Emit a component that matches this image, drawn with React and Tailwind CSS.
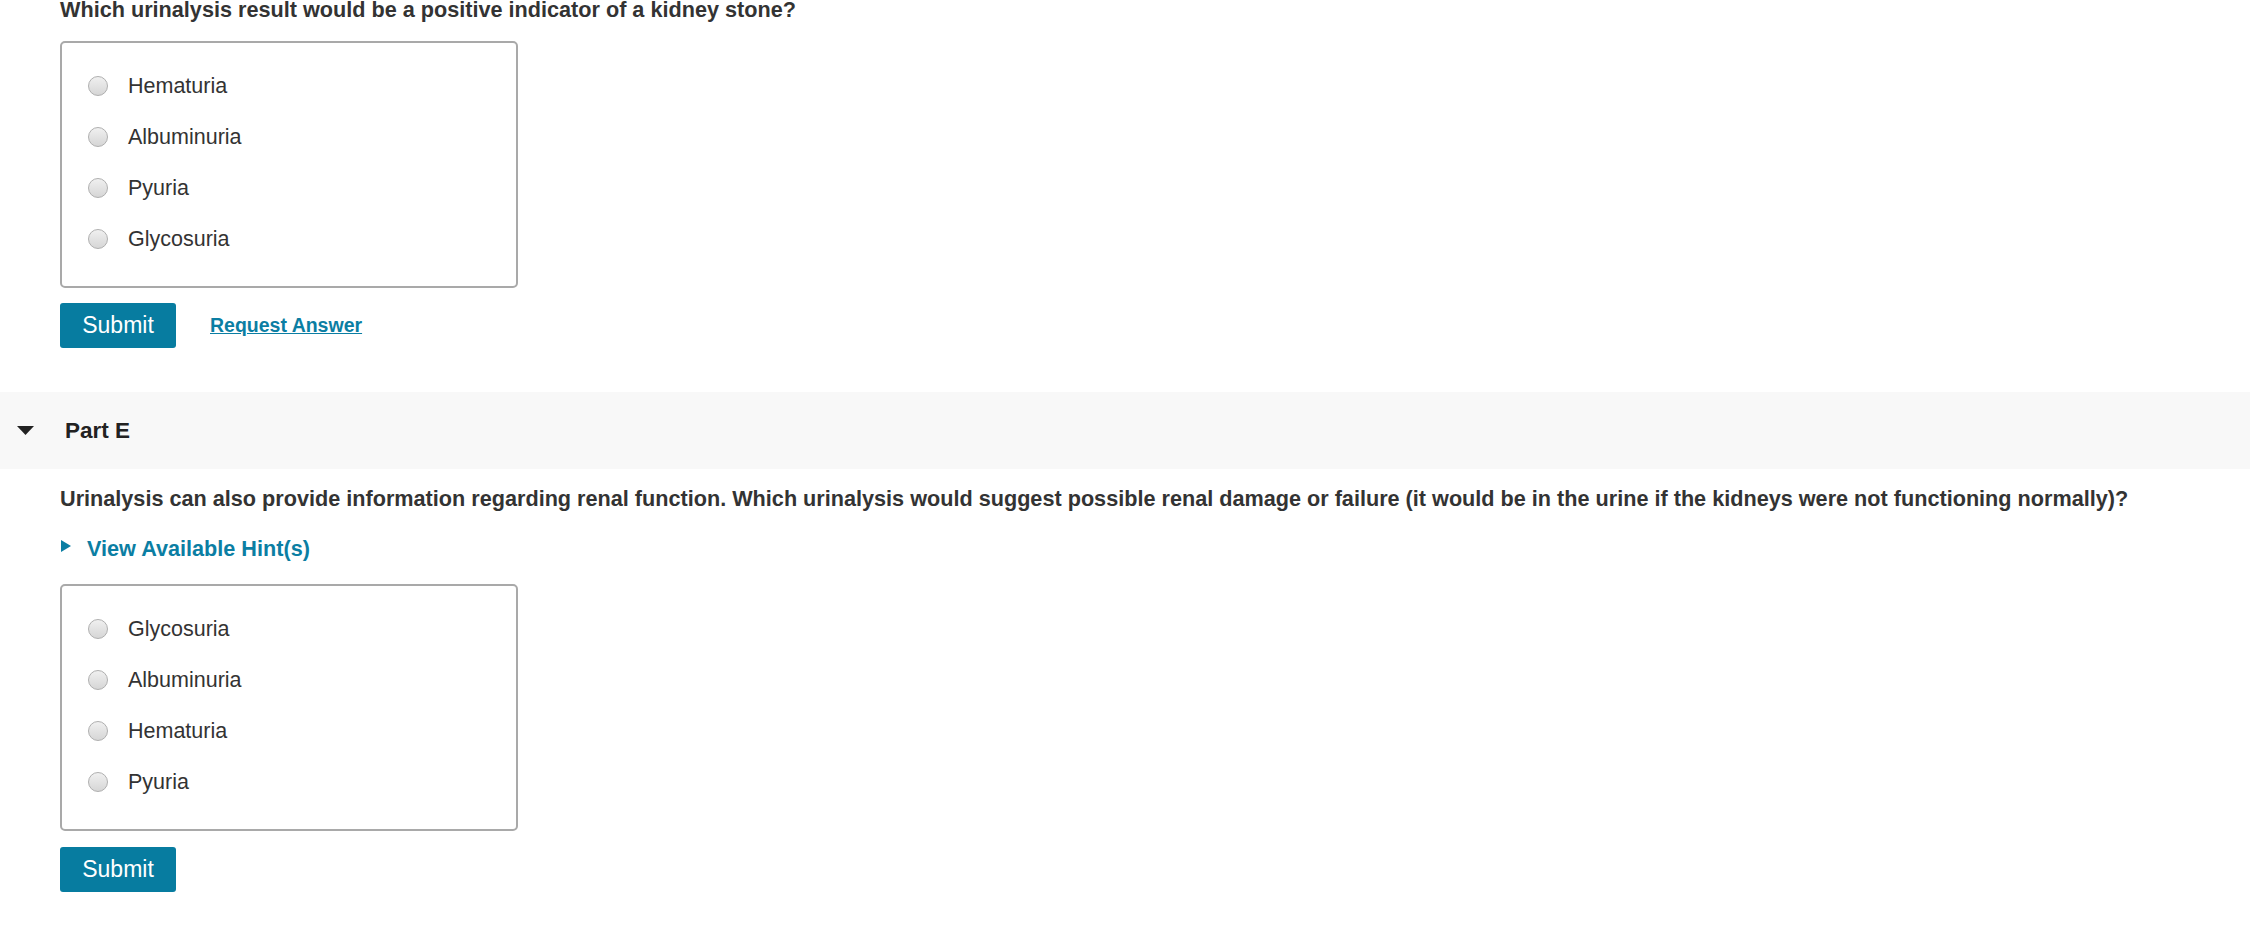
const FONT = "font-['Liberation_Sans',Arial,sans-serif]";

const PART_D_CHOICES = ['Hematuria', 'Albuminuria', 'Pyuria', 'Glycosuria'];
const PART_E_CHOICES = ['Glycosuria', 'Albuminuria', 'Hematuria', 'Pyuria'];

function Radio() {
  return (
    <span className="block h-[20px] w-[20px] shrink-0 rounded-full border border-[#afafaf] bg-gradient-to-b from-[#f0f0f0] to-[#d6d6d6]" />
  );
}

function ChoiceBox({ choices }) {
  return (
    <div className="box-border h-[247px] w-[458px] rounded-[5px] border-2 border-[#a9a9a9] pl-[26px] pt-[17px]">
      {choices.map((choice) => (
        <label key={choice} className="flex h-[51px] items-center gap-[20px]">
          <Radio />
          <span className="text-[21.5px] leading-[22px] text-[#333]">{choice}</span>
        </label>
      ))}
    </div>
  );
}

function SubmitButton() {
  return (
    <button
      type="button"
      className="h-[45px] w-[116px] rounded-[3px] bg-[#077ca0] text-[23px] leading-none text-white"
    >
      Submit
    </button>
  );
}

export default function App() {
  return (
    <div className={`${FONT} min-h-[931px] w-full bg-white text-[#333]`}>
      <div className="pl-[60px]">
        <p className="text-[21.65px] font-bold leading-[20px] text-[#333]">
          Which urinalysis result would be a positive indicator of a kidney stone?
        </p>
        <div className="mt-[21px]">
          <ChoiceBox choices={PART_D_CHOICES} />
        </div>
        <div className="mt-[15px] flex items-center gap-[34px]">
          <SubmitButton />
          <a href="#" className="text-[19.5px] font-bold text-[#0b7ea3] underline">
            Request Answer
          </a>
        </div>
      </div>

      <div className="mt-[44px] flex h-[77px] items-center bg-[#f8f8f8]">
        <svg width="17" height="9" viewBox="0 0 17 9" className="ml-[17px]">
          <path d="M0 0 H17 L8.5 9 Z" fill="#222" />
        </svg>
        <span className="ml-[31px] text-[22.5px] font-bold text-[#222]">Part E</span>
      </div>

      <div className="pl-[60px]">
        <p className="mt-[20px] text-[21.65px] font-bold leading-[20px] text-[#333]">
          Urinalysis can also provide information regarding renal function. Which urinalysis
          would suggest possible renal damage or failure (it would be in the urine if the
          kidneys were not functioning normally)?
        </p>
        <div className="mt-[30px] flex h-[20px] items-center">
          <svg width="10" height="12" viewBox="0 0 10 12" className="-mt-[6px] ml-[1px]">
            <path d="M0 0 L10 6 L0 12 Z" fill="#0b7ea3" />
          </svg>
          <span className="ml-[16px] text-[21.65px] font-bold leading-[20px] text-[#0b7ea3]">
            View Available Hint(s)
          </span>
        </div>
        <div className="mt-[25px]">
          <ChoiceBox choices={PART_E_CHOICES} />
        </div>
        <div className="mt-[16px]">
          <SubmitButton />
        </div>
      </div>
    </div>
  );
}
